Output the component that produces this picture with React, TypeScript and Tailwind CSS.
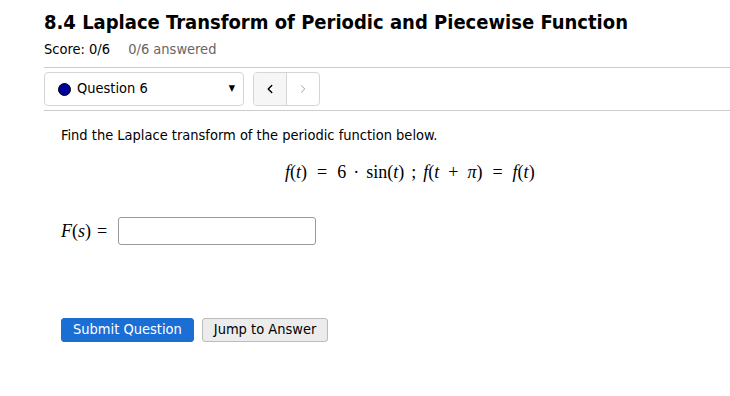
import { ChevronLeft, ChevronRight } from "lucide-react";

const sans = "font-['DejaVu_Sans',sans-serif] [font-stretch:condensed]";
const serif = "font-['Liberation_Serif',serif]";

function Math() {
	return (
		<span className={`${serif} text-[18px] text-black`}>
			<i>f</i>(<i>t</i>)<span className="mx-[10px]">=</span>6
			<span className="mx-[7px]">·</span>sin(<i>t</i>)
			<span className="mx-[7px]">;</span>
			<i>f</i>(<i>t</i>
			<span className="mx-[9px]">+</span>
			<i>π</i>)<span className="mx-[10px]">=</span>
			<i>f</i>(<i>t</i>)
		</span>
	);
}

export default function App() {
	return (
		<main className={`${sans} w-[730px] h-[396px] bg-white text-black overflow-hidden pl-[44px]`}>
			{/* header */}
			<h1 className="pt-[7px] text-[20px] font-bold leading-[30px]">
				8.4 Laplace Transform of Periodic and Piecewise Function
			</h1>
			<div className="mt-[3px] text-[14.5px] leading-[18px]">
				Score: 0/6 <span className="ml-[14px] text-[#666]">0/6 answered</span>
			</div>

			{/* question nav */}
			<div className="mt-[9px] border-t border-b border-[#cccccc] py-[4px] flex items-center gap-[9px]">
				<div className="w-[200px] h-[34px] border border-[#d5d5d5] rounded-[4px] flex items-center pl-[13px] pr-[8px]">
					<span className="w-[13px] h-[13px] rounded-full bg-[#00009a] border border-black" />
					<span className="ml-[6px] text-[14.5px]">Question 6</span>
					<span className="ml-auto text-[9px]">▼</span>
				</div>
				<div className="flex h-[34px] border border-[#d5d5d5] rounded-[4px] overflow-hidden">
					<div className="w-[33px] flex items-center justify-center bg-[#f6f6f6] border-r border-[#d5d5d5]">
						<ChevronLeft size={14} strokeWidth={2.5} />
					</div>
					<div className="w-[32px] flex items-center justify-center">
						<ChevronRight size={14} strokeWidth={1.5} className="text-[#999]" />
					</div>
				</div>
			</div>

			{/* question */}
			<div className="pl-[17px] pt-[15px]">
				<p className="text-[14.5px] leading-[18px]">Find the Laplace transform of the periodic function below.</p>
				<div className="mt-[16px] pl-[224px] leading-[24px]">
					<Math />
				</div>
				<div className="mt-[32px] flex items-center">
					<span className={`${serif} text-[18px] w-[57px]`}>
						<i>F</i>(<i>s</i>)<span className="ml-[6px]">=</span>
					</span>
					<input className="w-[198px] h-[28px] border border-[#999] rounded-[3px]" />
				</div>
				<div className="mt-[73px] flex gap-[8px]">
					<button className="h-[24px] px-[11px] rounded-[3px] bg-[#1b6ed4] text-white text-[14.5px] border border-[#1b6ed4]">
						Submit Question
					</button>
					<button className="h-[24px] px-[11px] rounded-[3px] bg-[#ececec] text-black text-[14.5px] border border-[#bbb]">
						Jump to Answer
					</button>
				</div>
			</div>
		</main>
	);
}
